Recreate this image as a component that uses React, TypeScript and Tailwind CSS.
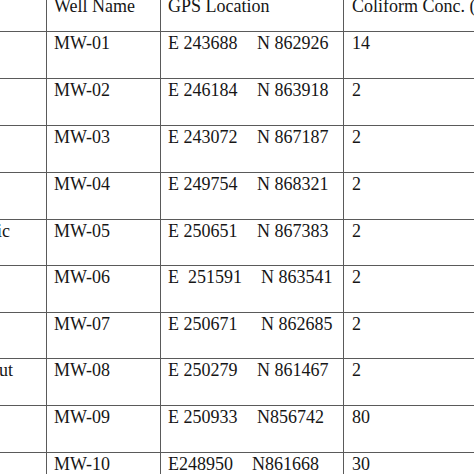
import React from "react";

type Row = {
  left?: string;
  leftPr?: string;
  well: string;
  e: string;
  eW: string;
  n: string;
  conc: string;
  h: string;
};

const rows: Row[] = [
  { well: "MW-01", e: "E 243688", eW: "w-[89px]", n: "N 862926", conc: "14", h: "h-[47px]" },
  { well: "MW-02", e: "E 246184", eW: "w-[89px]", n: "N 863918", conc: "2", h: "h-[47px]" },
  { well: "MW-03", e: "E 243072", eW: "w-[89px]", n: "N 867187", conc: "2", h: "h-[47px]" },
  { well: "MW-04", e: "E 249754", eW: "w-[89px]", n: "N 868321", conc: "2", h: "h-[47px]" },
  { left: "Domestic", leftPr: "pr-[36px]", well: "MW-05", e: "E 250651", eW: "w-[89px]", n: "N 867383", conc: "2", h: "h-[46px]" },
  { well: "MW-06", e: "E  251591", eW: "w-[93px]", n: "N 863541", conc: "2", h: "h-[47px]" },
  { well: "MW-07", e: "E 250671", eW: "w-[93px]", n: "N 862685", conc: "2", h: "h-[46px]" },
  { left: "Without", leftPr: "pr-[33px]", well: "MW-08", e: "E 250279", eW: "w-[89px]", n: "N 861467", conc: "2", h: "h-[47px]" },
  { well: "MW-09", e: "E 250933", eW: "w-[89px]", n: "N856742", conc: "80", h: "h-[47px]" },
];

function DataRow({ r, last }: { r: Row; last?: boolean }) {
  return (
    <div
      className={`grid grid-cols-[47px_114px_183px_1fr] ${last ? "flex-1" : r.h + " border-b border-[#5a5a5a]"}`}
    >
      <div className={`flex justify-end border-r border-[#5a5a5a] pt-[1px] ${r.leftPr ?? ""}`}>
        {r.left ? <span className="shrink-0 whitespace-nowrap">{r.left}</span> : null}
      </div>
      <div className="border-r border-[#5a5a5a] pl-[7px] pt-[1px] whitespace-nowrap">{r.well}</div>
      <div className="flex border-r border-[#5a5a5a] pl-[7px] pt-[1px] whitespace-pre">
        <span className={`${r.eW} shrink-0`}>{r.e}</span>
        <span>{r.n}</span>
      </div>
      <div className="pl-2 pt-[1px] whitespace-nowrap">{r.conc}</div>
    </div>
  );
}

export default function App() {
  const lastRow: Row = { well: "MW-10", e: "E248950", eW: "w-[84px]", n: "N861668", conc: "30", h: "" };
  return (
    <div
      className="w-[474px] h-[474px] overflow-hidden bg-white text-[#161616] text-[18px] leading-[20px] flex flex-col"
      style={{ fontFamily: '"Liberation Serif", "Times New Roman", serif' }}
    >
      <div className="grid grid-cols-[47px_114px_183px_1fr] h-[32px] border-b border-[#5a5a5a]">
        <div className="border-r border-[#5a5a5a]" />
        <div className="border-r border-[#5a5a5a] pl-[7px] whitespace-nowrap">
          <div className="-mt-[4px]">Well Name</div>
        </div>
        <div className="border-r border-[#5a5a5a] pl-[7px] whitespace-nowrap">
          <div className="-mt-[4px]">GPS Location</div>
        </div>
        <div className="pl-2 whitespace-nowrap overflow-hidden">
          <div className="-mt-[4px]">Coliform Conc. (CFU/100ml)</div>
        </div>
      </div>
      {rows.map((r) => (
        <DataRow key={r.well} r={r} />
      ))}
      <DataRow r={lastRow} last />
    </div>
  );
}
